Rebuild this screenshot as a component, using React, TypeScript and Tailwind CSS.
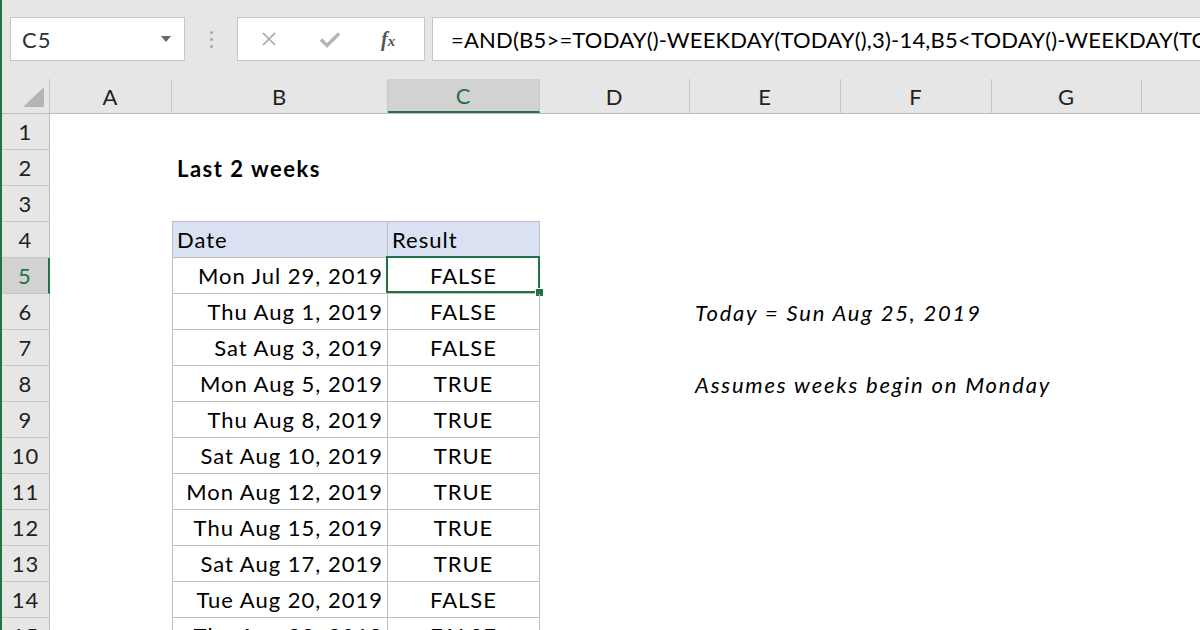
import { ReactNode } from 'react';

const GREEN = '#217346';

type Col = { label: string; w: string };

const cols: Col[] = [
    { label: 'A', w: 'w-[122px]' },
    { label: 'B', w: 'w-[216px]' },
    { label: 'C', w: 'w-[152px]' },
    { label: 'D', w: 'w-[150px]' },
    { label: 'E', w: 'w-[151px]' },
    { label: 'F', w: 'w-[151px]' },
    { label: 'G', w: 'w-[150px]' },
    { label: 'H', w: 'w-[150px]' },
];

type Row = { n: number; date?: string; result?: string; note?: string };

const rows: Row[] = [
    { n: 1 },
    { n: 2 },
    { n: 3 },
    { n: 4 },
    { n: 5, date: 'Mon Jul 29, 2019', result: 'FALSE' },
    { n: 6, date: 'Thu Aug 1, 2019', result: 'FALSE', note: 'Today = Sun Aug 25, 2019' },
    { n: 7, date: 'Sat Aug 3, 2019', result: 'FALSE' },
    { n: 8, date: 'Mon Aug 5, 2019', result: 'TRUE', note: 'Assumes weeks begin on Monday' },
    { n: 9, date: 'Thu Aug 8, 2019', result: 'TRUE' },
    { n: 10, date: 'Sat Aug 10, 2019', result: 'TRUE' },
    { n: 11, date: 'Mon Aug 12, 2019', result: 'TRUE' },
    { n: 12, date: 'Thu Aug 15, 2019', result: 'TRUE' },
    { n: 13, date: 'Sat Aug 17, 2019', result: 'TRUE' },
    { n: 14, date: 'Tue Aug 20, 2019', result: 'FALSE' },
    { n: 15, date: 'Thu Aug 22, 2019', result: 'FALSE' },
];

const Cell = ({ w, className = '', children }: { w: string; className?: string; children?: ReactNode }) => (
    <div className={`${w} h-full shrink-0 flex items-center ${className}`}>{children}</div>
);

const FormulaBar = () => (
    <div className="h-[79px] bg-[#e6e6e6] flex items-start pt-[17px] pl-[8px]">
        <div className="w-[175px] h-[44px] bg-white border border-[#c6c6c6] flex items-center pl-[11px] pr-[13px] text-[#333]">
            <span className="flex-1">C5</span>
            <svg width="10" height="6" viewBox="0 0 10 6"><polygon points="0,0 10,0 5,6" fill="#666" /></svg>
        </div>
        <div className="w-[52px] h-[44px] flex flex-col items-center justify-center gap-[4px]">
            <span className="w-[3px] h-[3px] bg-[#a6a6a6] rounded-full" />
            <span className="w-[3px] h-[3px] bg-[#a6a6a6] rounded-full" />
            <span className="w-[3px] h-[3px] bg-[#a6a6a6] rounded-full" />
        </div>
        <div className="w-[188px] h-[44px] bg-white border border-[#c6c6c6] flex items-center pl-[23px]">
            <svg width="16" height="16" viewBox="0 0 16 16" className="mr-[42px]">
                <path d="M2 2 L14 14 M14 2 L2 14" stroke="#a6a6a6" strokeWidth="1.6" fill="none" />
            </svg>
            <svg width="22" height="17" viewBox="0 0 22 17" className="mr-[40px]">
                <path d="M2 8.5 L8 14.5 L20 2.5" stroke="#b4b4b4" strokeWidth="3.4" fill="none" />
            </svg>
            <span className="text-[#555] italic font-bold text-[20px] leading-none tracking-normal" style={{ fontFamily: '"Liberation Serif", serif' }}>
                f<span className="text-[15px]">x</span>
            </span>
        </div>
        <div className="flex-1 h-[44px] ml-[7px] bg-white border border-[#c6c6c6] border-r-0 flex items-center pl-[18px] text-black whitespace-nowrap overflow-hidden tracking-[0.2px]">
            =AND(B5&gt;=TODAY()-WEEKDAY(TODAY(),3)-14,B5&lt;TODAY()-WEEKDAY(TODAY(),3)-7)
        </div>
    </div>
);

const HeaderRow = () => (
    <div className="h-[35px] flex bg-[#e6e6e6] border-b border-[#bdbdbd]">
        <div className="w-[48px] h-full shrink-0 border-r border-[#c6c6c6] flex items-end justify-end pr-[5px] pb-[6px]">
            <svg width="21" height="20" viewBox="0 0 21 20"><polygon points="21,0 21,20 0,20" fill="#b4b4b4" /></svg>
        </div>
        {cols.map(c => (
            <Cell
                key={c.label}
                w={c.w}
                className={`justify-center border-r border-[#c6c6c6] ${c.label === 'C' ? 'bg-[#d2d2d2] text-[#217346] border-b-2 border-b-[#217346]' : 'text-[#222]'}`}
            >
                {c.label}
            </Cell>
        ))}
    </div>
);

const tableB = 'border-l border-r border-b border-[#bfbfbf]';
const tableC = 'border-r border-b border-[#bfbfbf]';

const SheetRow = ({ row }: { row: Row }) => {
    const inTable = row.n >= 4;
    const selected = row.n === 5;
    return (
        <div className="h-[36px] flex">
            <div
                className={`w-[48px] h-full shrink-0 flex items-center justify-center border-b border-[#c8c8c8] ${
                    selected ? 'bg-[#d2d2d2] text-[#217346] border-r-2 border-r-[#217346]' : 'bg-[#e6e6e6] text-[#222] border-r border-r-[#bdbdbd]'
                }`}
            >
                {row.n}
            </div>
            <Cell w="w-[122px]" />
            <Cell
                w="w-[216px]"
                className={`${inTable ? tableB : ''} ${row.n === 3 ? 'border-b border-[#bfbfbf]' : ''} ${row.n === 4 ? 'bg-[#d9e1f2] pl-[4px]' : 'justify-end pr-[4px]'}`}
            >
                {row.n === 2 && <span className="font-bold pl-[5px] w-full tracking-[1.5px]">Last 2 weeks</span>}
                {row.n === 4 && 'Date'}
                {row.date}
            </Cell>
            <Cell
                w="w-[152px]"
                className={`relative ${inTable ? tableC : ''} ${row.n === 3 ? 'border-b border-[#bfbfbf]' : ''} ${row.n === 4 ? 'bg-[#d9e1f2] pl-[4px]' : 'justify-center'}`}
            >
                {row.n === 4 && 'Result'}
                {row.result}
                {selected && (
                    <>
                        <div className="absolute -left-[2px] -top-[2px] -right-[1px] bottom-0 border-2 border-[#217346]" />
                        <div className="absolute -right-[5px] -bottom-[4px] w-[9px] h-[9px] bg-[#217346] border border-white" />
                    </>
                )}
            </Cell>
            <Cell w="w-[150px]" />
            <Cell w="w-[151px]" className="relative overflow-visible">
                {row.note && <span className="absolute left-[5px] italic whitespace-nowrap tracking-[1.8px]">{row.note}</span>}
            </Cell>
        </div>
    );
};

export default function App() {
    return (
        <div
            className="w-[1200px] h-[630px] overflow-hidden bg-white border-l-2 border-[#217346] text-[22px] tracking-[1px] text-black"
            style={{ fontFamily: 'Lato, "Liberation Sans", sans-serif', borderLeftColor: GREEN }}
        >
            <FormulaBar />
            <HeaderRow />
            {rows.map(r => (
                <SheetRow key={r.n} row={r} />
            ))}
        </div>
    );
}
